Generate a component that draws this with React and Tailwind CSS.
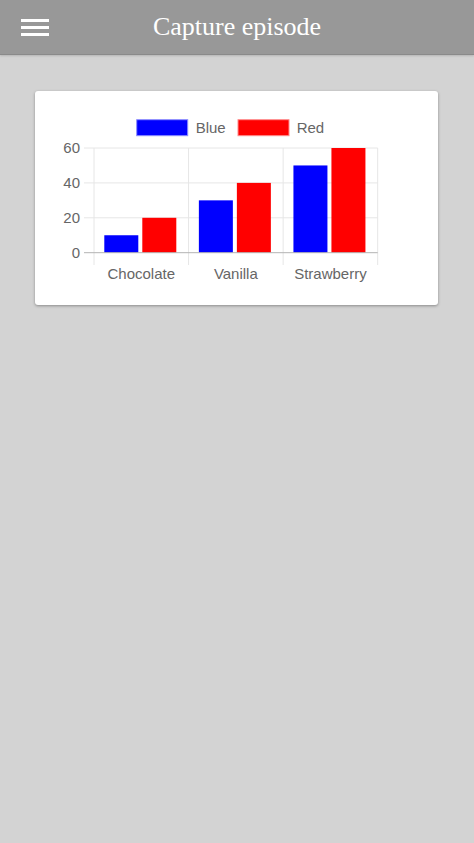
import React from 'react';

const data = [
  { label: 'Chocolate', blue: 10, red: 20 },
  { label: 'Vanilla', blue: 30, red: 40 },
  { label: 'Strawberry', blue: 50, red: 60 },
];

const left = 59;
const right = 342.7;
const top = 57;
const zero = 161.7;
const colW = (right - left) / 3;
const unit = (zero - top) / 60;

const BarChart = () => {
  return (
    <svg width="403" height="214" className="block" style={{ fontFamily: '"Liberation Sans", Arial, sans-serif' }}>
      {/* legend */}
      <rect x="101.7" y="28.7" width="51" height="16" fill="#0000ff" stroke="#8c8cff" strokeWidth="1" />
      <text x="160.7" y="38" fontSize="15" fill="#666" dominantBaseline="middle">Blue</text>
      <rect x="203" y="28.7" width="51" height="16" fill="#ff0000" stroke="#ff8c8c" strokeWidth="1" />
      <text x="261.7" y="38" fontSize="15" fill="#666" dominantBaseline="middle">Red</text>

      {/* grid */}
      {[60, 40, 20].map((v) => (
        <g key={v}>
          <line x1="49" x2={right} y1={zero - v * unit} y2={zero - v * unit} stroke="#e6e6e6" strokeWidth="1" />
          <text x="45" y={zero - v * unit + 1} fontSize="15" fill="#666" textAnchor="end" dominantBaseline="middle">{v}</text>
        </g>
      ))}
      <text x="45" y={zero + 1} fontSize="15" fill="#666" textAnchor="end" dominantBaseline="middle">0</text>
      {[0, 1, 2, 3].map((i) => (
        <line key={i} x1={left + colW * i} x2={left + colW * i} y1={top} y2="174" stroke="#e6e6e6" strokeWidth="1" />
      ))}

      {/* bars */}
      {data.map((d, i) => {
        const x = left + colW * i;
        return (
          <g key={d.label}>
            <rect x={x + 10.3} y={zero - d.blue * unit} width="34" height={d.blue * unit} fill="#0000ff" />
            <rect x={x + 48.3} y={zero - d.red * unit} width="34" height={d.red * unit} fill="#ff0000" />
            <text x={x + colW / 2} y="184.5" fontSize="15" fill="#666" textAnchor="middle" dominantBaseline="middle">{d.label}</text>
          </g>
        );
      })}
      <line x1="49" x2={right} y1={zero} y2={zero} stroke="#b3b3b3" strokeWidth="1" />
    </svg>
  );
};

const App = () => {
  return (
    <div className="min-h-screen bg-[#d3d3d3]">
      <div className="h-[55px] bg-[#989898] border-b border-[#8a8a8a] shadow-[0_1px_2px_rgba(0,0,0,0.15)] flex items-center relative">
        <button className="absolute left-[21px] top-[19px] flex flex-col gap-[4.5px]">
          <span className="block w-[28px] h-[2.5px] bg-white"></span>
          <span className="block w-[28px] h-[2.5px] bg-white"></span>
          <span className="block w-[28px] h-[2.5px] bg-white"></span>
        </button>
        <h1 className="flex-1 text-center text-white text-[26px] leading-none pb-[1px]" style={{ fontFamily: '"Liberation Serif", "Times New Roman", serif' }}>
          Capture episode
        </h1>
      </div>

      <div className="ml-[35px] mr-[36px] mt-[36px] bg-white rounded-[3px] shadow-[0_1px_3px_rgba(0,0,0,0.35)]">
        <BarChart />
      </div>
    </div>
  );
};

export default App;
